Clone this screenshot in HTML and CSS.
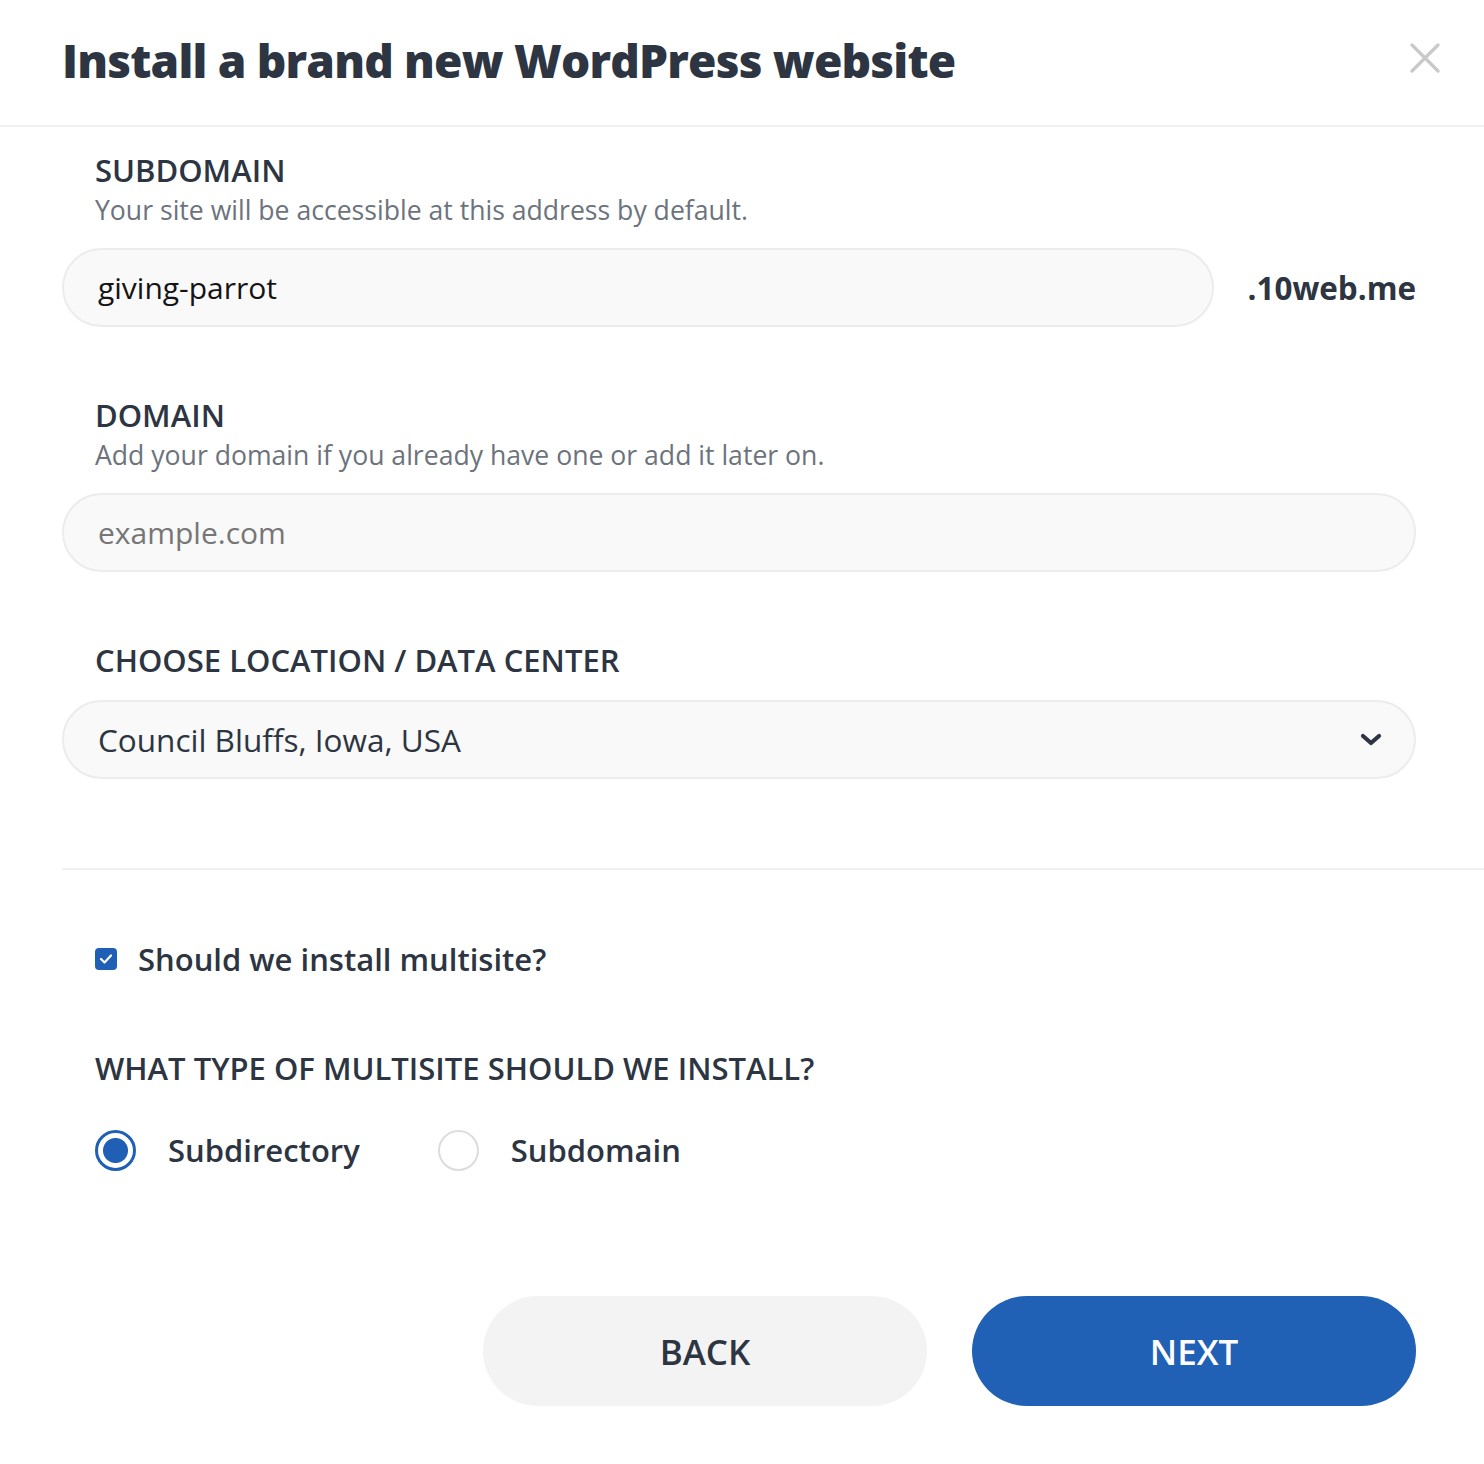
FILE: index.html
```html
<!DOCTYPE html>
<html lang="en">
<head>
  <meta charset="UTF-8">
  <meta name="viewport" content="width=device-width, initial-scale=1.0">
  <title>Install a brand new WordPress website</title>
  <link rel="stylesheet" href="styles.css">
</head>
<body>
  <div class="modal">
    <div class="modal-header">
      <h1>Install a brand new WordPress website</h1>
      <button class="close" aria-label="Close">
        <svg width="30" height="30" viewBox="0 0 30 30">
          <path d="M2 2 L28 28 M28 2 L2 28" stroke="#c9c9c9" stroke-width="3.2" stroke-linecap="round" fill="none"/>
        </svg>
      </button>
    </div>

    <div class="modal-body">
      <div class="field">
        <label class="field-label">SUBDOMAIN</label>
        <p class="field-desc">Your site will be accessible at this address by default.</p>
        <div class="input-row">
          <div class="input">giving-parrot</div>
          <span class="suffix">.10web.me</span>
        </div>
      </div>

      <div class="field">
        <label class="field-label">DOMAIN</label>
        <p class="field-desc">Add your domain if you already have one or add it later on.</p>
        <div class="input placeholder">example.com</div>
      </div>

      <div class="field">
        <label class="field-label">CHOOSE LOCATION / DATA CENTER</label>
        <div class="input select">
          <span>Council Bluffs, Iowa, USA</span>
          <svg width="22" height="14" viewBox="0 0 22 14">
            <path d="M3 3 L11 10 L19 3" stroke="#2c3541" stroke-width="4.2" stroke-linecap="round" stroke-linejoin="round" fill="none"/>
          </svg>
        </div>
      </div>
    </div>

    <hr class="divider">

    <div class="options">
      <div class="check-row">
        <span class="checkbox">
          <svg width="14" height="12" viewBox="0 0 14 12">
            <path d="M2 6 L5.5 9.5 L12 2.5" stroke="#fff" stroke-width="2.2" stroke-linecap="round" stroke-linejoin="round" fill="none"/>
          </svg>
        </span>
        <span class="check-label">Should we install multisite?</span>
      </div>

      <label class="field-label">WHAT TYPE OF MULTISITE SHOULD WE INSTALL?</label>
      <div class="radio-row">
        <div class="radio-item">
          <span class="radio checked"></span>
          <span class="radio-label">Subdirectory</span>
        </div>
        <div class="radio-item">
          <span class="radio"></span>
          <span class="radio-label">Subdomain</span>
        </div>
      </div>
    </div>

    <div class="actions">
      <button class="btn btn-back">BACK</button>
      <button class="btn btn-next">NEXT</button>
    </div>
  </div>
</body>
</html>
```

FILE: styles.css
```css
body {
  margin: 0px;
  font-family: 'Open Sans', 'Noto Sans', sans-serif;
  background-color: #ffffff;
  color: #2c3541;
}

.modal {
  width: 1484px;
}

.modal-header {
  height: 125px;
  display: flex;
  align-items: center;
  justify-content: space-between;
  padding: 0px 44px 0px 62px;
  border-bottom: 2px solid #f0f0f0;
}

h1 {
  margin: 0px;
  margin-top: -6px;
  font-size: 46px;
  letter-spacing: -0.8px;
  font-weight: 800;
  color: #2c3541;
}

.close {
  border: none;
  background: none;
  padding: 0px;
  margin-top: -10px;
  display: flex;
}

.modal-body {
  padding: 23px 68px 0px 62px;
}

.field {
  margin-bottom: 68px;
}

.field:last-child {
  margin-bottom: 0px;
}

.field-label {
  display: block;
  padding-left: 33px;
  font-size: 31px;
  line-height: 40px;
  font-weight: 600;
  color: #2c3541;
}

.field-desc {
  margin: 3px 0px 21px 0px;
  padding-left: 33px;
  font-size: 26.6px;
  line-height: 34px;
  color: #6c737c;
}

.input-row {
  display: flex;
  align-items: center;
}

.input {
  box-sizing: border-box;
  height: 79px;
  display: flex;
  align-items: center;
  padding: 0px 34px;
  border: 2px solid #ececec;
  border-radius: 40px;
  background-color: #f9f9f9;
  font-size: 30px;
  color: #141414;
}

.input-row .input {
  width: 1152px;
}

.suffix {
  margin-left: auto;
  font-size: 31.4px;
  font-weight: 700;
  color: #2c3541;
}

.placeholder {
  color: #767676;
}

.select {
  margin-top: 20px;
  justify-content: space-between;
  font-size: 31.5px;
  color: #2c3541;
  padding-right: 32px;
}

.divider {
  margin: 89px 0px 0px 62px;
  border: none;
  border-top: 2px solid #f0f0f0;
}

.options {
  padding: 0px 68px 0px 62px;
}

.check-row {
  display: flex;
  align-items: center;
  height: 60px;
  margin-top: 59px;
  padding-left: 33px;
  margin-bottom: 59px;
}

.checkbox {
  width: 22px;
  height: 22px;
  border-radius: 4px;
  background-color: #1f5fb5;
  display: flex;
  align-items: center;
  justify-content: center;
}

.check-label {
  margin-left: 21px;
  font-size: 31px;
  font-weight: 600;
  color: #2c3541;
}

.radio-row {
  display: flex;
  padding-left: 33px;
  margin-top: 41px;
}

.radio-item {
  display: flex;
  align-items: center;
  margin-right: 78px;
}

.radio {
  box-sizing: border-box;
  width: 41px;
  height: 41px;
  border-radius: 50%;
  border: 2px solid #dcdcdc;
  background-color: #fff;
}

.radio.checked {
  border: 3px solid #1f5fb5;
  background: radial-gradient(circle, #1f5fb5 0px, #1f5fb5 12px, #fff 13px);
}

.radio-label {
  margin-left: 32px;
  font-size: 31px;
  font-weight: 600;
  color: #2c3541;
}

.actions {
  display: flex;
  justify-content: flex-end;
  gap: 45px;
  padding: 125px 68px 0px 62px;
}

.btn {
  width: 444px;
  height: 110px;
  border: none;
  border-radius: 55px;
  font-family: 'Open Sans', 'Noto Sans', sans-serif;
  font-size: 35px;
  font-weight: 600;
}

.btn-back {
  background-color: #f3f3f3;
  color: #2c3541;
}

.btn-next {
  background-color: #2060b5;
  color: #ffffff;
}
```
